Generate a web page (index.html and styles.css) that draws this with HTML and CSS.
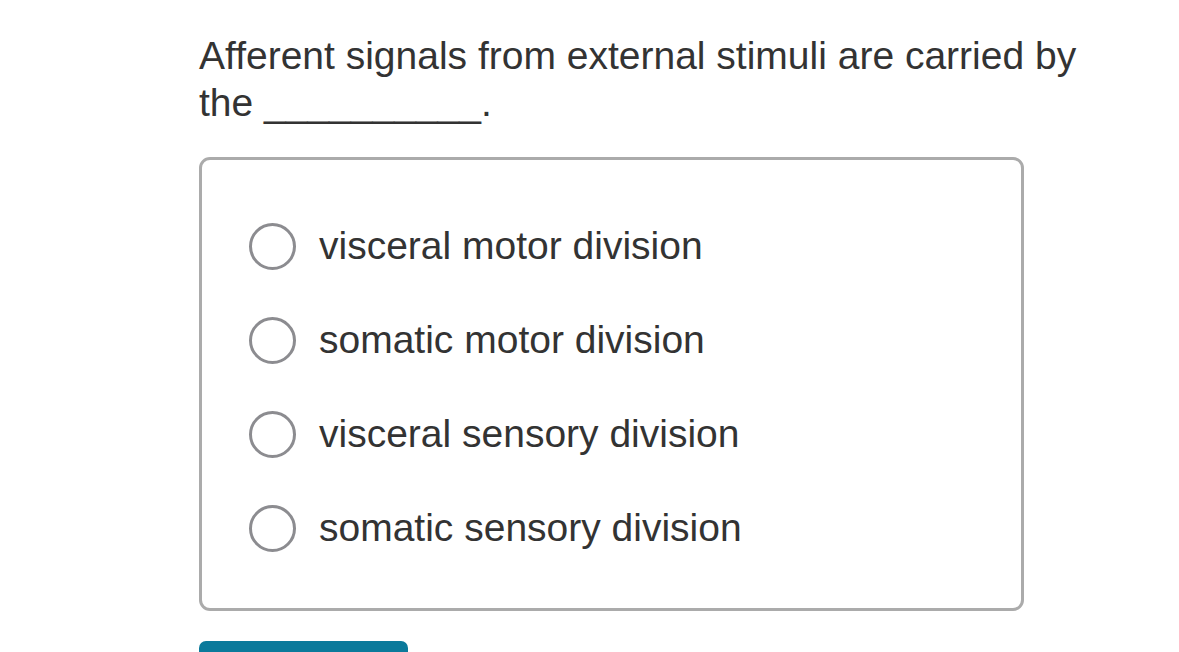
FILE: index.html
```html
<!DOCTYPE html>
<html>
<head>
<meta charset="utf-8">
<link rel="stylesheet" href="styles.css">
</head>
<body>
<div class="page">
  <p class="question">Afferent signals from external stimuli are carried by the __________.</p>
  <div class="options">
    <label class="option"><span class="radio"></span><span class="label">visceral motor division</span></label>
    <label class="option"><span class="radio"></span><span class="label">somatic motor division</span></label>
    <label class="option"><span class="radio"></span><span class="label">visceral sensory division</span></label>
    <label class="option"><span class="radio"></span><span class="label">somatic sensory division</span></label>
  </div>
  <div class="submit"></div>
</div>
</body>
</html>
```
FILE: styles.css
```css
html, body {
  margin: 0;
  padding: 0;
  background: #fff;
  overflow: hidden;
}
.page {
  width: 900px;
  margin-left: 199px;
  padding-top: 32px;
  font-family: "Liberation Sans", Arial, sans-serif;
  color: #333;
}
.question {
  margin: 0;
  font-size: 39px;
  line-height: 47px;
  width: 900px;
}
.options {
  box-sizing: border-box;
  width: 825px;
  height: 454px;
  margin-top: 31px;
  border: 3px solid #ababab;
  border-radius: 11px;
  padding: 63px 0 0 47px;
  display: flex;
  flex-direction: column;
  gap: 48px;
}
.option {
  display: flex;
  align-items: center;
  height: 46px;
}
.radio {
  box-sizing: border-box;
  width: 47px;
  height: 47px;
  border: 3.5px solid #8c8c90;
  border-radius: 50%;
  flex: none;
}
.label {
  margin-left: 23px;
  font-size: 39px;
  color: #333;
}
.submit {
  margin-top: 30px;
  width: 209px;
  height: 40px;
  background: #0b7a9b;
  border-radius: 7px;
}
```
